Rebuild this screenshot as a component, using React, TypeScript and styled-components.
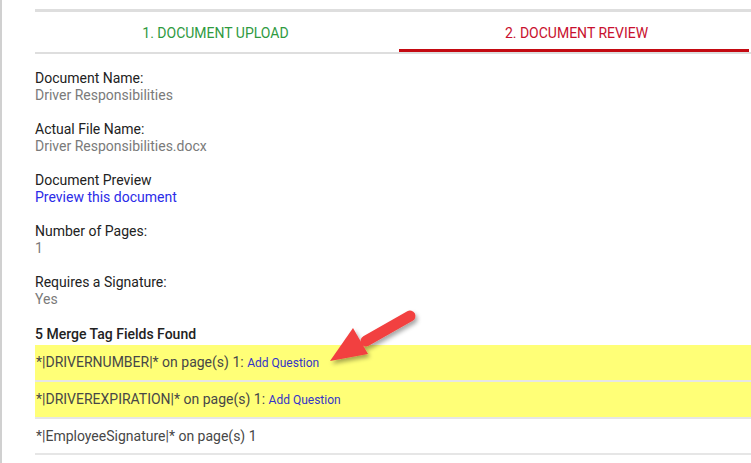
import styled, { createGlobalStyle } from 'styled-components';

const GlobalStyle = createGlobalStyle`
  html, body {
    margin: 0;
    padding: 0;
    background: #fff;
  }
  body {
    font-family: Roboto, 'Liberation Sans', Arial, sans-serif;
    font-size: 14px;
    color: #222;
  }
`;

interface Field {
  label: string;
  value: string;
  link?: boolean;
}

interface MergeTag {
  tag: string;
  pages: string;
  missing: boolean;
}

const fields: Field[] = [
  { label: 'Document Name:', value: 'Driver Responsibilities' },
  { label: 'Actual File Name:', value: 'Driver Responsibilities.docx' },
  { label: 'Document Preview', value: 'Preview this document', link: true },
  { label: 'Number of Pages:', value: '1' },
  { label: 'Requires a Signature:', value: 'Yes' },
];

const tags: MergeTag[] = [
  { tag: '*|DRIVERNUMBER|*', pages: '1', missing: true },
  { tag: '*|DRIVEREXPIRATION|*', pages: '1', missing: true },
  { tag: '*|EmployeeSignature|*', pages: '1', missing: false },
];

const App = () => {
  return (
    <Page>
      <GlobalStyle />
      <Tabs>
        <Tab state={'done'}>1. Document Upload</Tab>
        <Tab state={'active'}>2. Document Review</Tab>
      </Tabs>
      <Content>
        {fields.map(item => (
          <FieldGroup key={item.label}>
            <Label>{item.label}</Label>
            {item.link ? (
              <PreviewLink href={'#'}>{item.value}</PreviewLink>
            ) : (
              <Value>{item.value}</Value>
            )}
          </FieldGroup>
        ))}
        <Heading>5 Merge Tag Fields Found</Heading>
        <TagList>
          {tags.map(item => (
            <TagRow key={item.tag} highlight={item.missing}>
              {item.tag} on page(s) {item.pages}
              {item.missing ? (
                <>
                  : <AddQuestion href={'#'}>Add Question</AddQuestion>
                </>
              ) : (
                <></>
              )}
            </TagRow>
          ))}
        </TagList>
      </Content>
      <Arrow width={100} height={60} viewBox={'0 0 100 60'}>
        <defs>
          <filter id={'shadow'} x={'-20%'} y={'-20%'} width={'150%'} height={'160%'}>
            <feDropShadow dx={2} dy={3} stdDeviation={2} floodColor={'#000'} floodOpacity={0.35} />
          </filter>
        </defs>
        <g filter={'url(#shadow)'}>
          <line x1={84} y1={9} x2={40} y2={34} stroke={'#f2403f'} strokeWidth={11} strokeLinecap={'round'} />
          <polygon points={'4,54 27,21 42,47'} fill={'#f2403f'} />
        </g>
      </Arrow>
    </Page>
  );
};

export default App;

const Page = styled.div`
  position: relative;
  min-height: 463px;
  border-left: 2px solid #d0d0d0;
  padding: 9px 0 0 33px;
  box-sizing: border-box;
  overflow: hidden;
`;

const Tabs = styled.div`
  display: flex;
  border-top: 3px solid #dedede;
  border-bottom: 2px solid #dedede;
  height: 40px;
  margin-right: -6px;
`;

const Tab = styled.div<{ state: 'done' | 'active' }>`
  position: relative;
  flex: 1;
  display: flex;
  align-items: center;
  justify-content: center;
  padding-top: 2px;
  text-transform: uppercase;
  font-size: 14px;
  color: ${p => (p.state === 'active' ? '#c8102e' : '#2f9a3f')};

  &::after {
    content: '';
    display: ${p => (p.state === 'active' ? 'block' : 'none')};
    position: absolute;
    left: 3px;
    right: 8px;
    bottom: 0;
    height: 3px;
    background: #c40a12;
  }
`;

const Content = styled.div`
  padding-top: 16px;
  display: flex;
  flex-direction: column;
`;

const FieldGroup = styled.div`
  display: flex;
  flex-direction: column;
  margin-bottom: 17px;
  line-height: 17px;
`;

const Label = styled.div`
  color: #222;
`;

const Value = styled.div`
  color: #7a7a7a;
`;

const PreviewLink = styled.a`
  color: #2b2be8;
  text-decoration: none;
  width: fit-content;
`;

const Heading = styled.div`
  font-weight: 500;
  line-height: 18px;
  margin-bottom: 2px;
  color: #222;
`;

const TagList = styled.div`
  display: flex;
  flex-direction: column;
`;

const TagRow = styled.div<{ highlight: boolean }>`
  padding: 8px 1px;
  line-height: 18px;
  color: #474747;
  background: ${p => (p.highlight ? '#ffff77' : '#fff')};
  border-bottom: 2px solid #e6e6e6;
`;

const AddQuestion = styled.a`
  font-size: 12px;
  color: #3434c8;
  text-decoration: none;
`;

const Arrow = styled.svg`
  position: absolute;
  left: 324px;
  top: 307px;
  overflow: visible;
`;
